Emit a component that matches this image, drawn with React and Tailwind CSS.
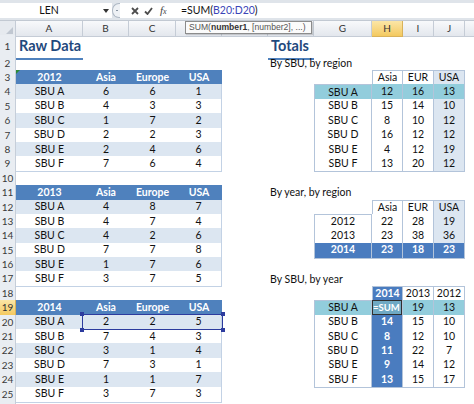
import React from "react";

const COLS =
  "grid grid-cols-[16px_67px_46px_47px_46px_46px_46px_58px_31px_31px_31px_40px]";
const C = "flex items-center justify-center overflow-hidden whitespace-nowrap";

const LHEAD = `${C} bg-[#4f81bd] text-white font-bold`;
const LBAND = `${C} bg-[#dce6f1] border-b border-[#c3d2e5]`;
const LWHITE = `${C} bg-white border-b border-[#c3d2e5]`;

const TITLE =
  "flex items-end pb-[1px] pl-[3px] font-bold text-[14.5px] text-[#1f497d] border-b-2 border-[#4f81bd] whitespace-nowrap";
const SUB =
  "flex items-center pl-[2px] whitespace-nowrap overflow-visible text-[#111] z-10";

const H = (t) => ({ t, cls: LHEAD });
const L = (t, band, last) => ({
  t,
  cls: `${band ? LBAND : LWHITE}${last ? " border-r" : ""}`,
});
const leftHead = (y) => [H(y), H("Asia"), H("Europe"), H("USA")];
const leftRow = (band, s, a, b, c) => [
  L(s, band),
  L(a, band),
  L(b, band),
  L(c, band, true),
];
const leftEmpty = [null, null, null, null];

const RB = `${C} border-r border-b border-[#b3c4da]`;
const R = (t, bg, extra = "") => ({ t, cls: `${RB} ${bg} ${extra}` });
const WH = "bg-white";
const TEAL = "bg-[#92cddc]";
const LIGHT = "bg-[#dce6f1]";
const DARK = "bg-[#4a7cbf] text-white font-bold";

const rightEmpty = [null, null, null, null];

const rows = [
  [1, [{ t: "Raw Data", cls: TITLE }, null, null, null], [null, { t: "Totals", cls: TITLE }], rightEmpty],
  [2, leftEmpty, [null, { t: "By SBU, by region", cls: SUB }], rightEmpty],
  [3, leftHead("2012"), [null, null], [null, R("Asia", WH, "border-l border-t"), R("EUR", WH, "border-t"), R("USA", LIGHT, "border-t")]],
  [4, leftRow(true, "SBU A", 6, 6, 1), [null, null], [R("SBU A", TEAL, "border-l border-t"), R(12, TEAL), R(16, TEAL), R(13, TEAL)]],
  [5, leftRow(false, "SBU B", 4, 3, 3), [null, null], [R("SBU B", WH, "border-l"), R(15, WH), R(14, WH), R(10, LIGHT)]],
  [6, leftRow(true, "SBU C", 1, 7, 2), [null, null], [R("SBU C", WH, "border-l"), R(8, WH), R(10, WH), R(12, LIGHT)]],
  [7, leftRow(false, "SBU D", 2, 2, 3), [null, null], [R("SBU D", WH, "border-l"), R(16, WH), R(12, WH), R(12, LIGHT)]],
  [8, leftRow(true, "SBU E", 2, 4, 6), [null, null], [R("SBU E", WH, "border-l"), R(4, WH), R(12, WH), R(19, LIGHT)]],
  [9, leftRow(false, "SBU F", 7, 6, 4), [null, null], [R("SBU F", WH, "border-l"), R(13, WH), R(20, WH), R(12, LIGHT)]],
  [10, leftEmpty, [null, null], rightEmpty],
  [11, leftHead("2013"), [null, { t: "By year, by region", cls: SUB }], rightEmpty],
  [12, leftRow(true, "SBU A", 4, 8, 7), [null, null], [null, R("Asia", WH, "border-l border-t"), R("EUR", WH, "border-t"), R("USA", LIGHT, "border-t")]],
  [13, leftRow(false, "SBU B", 4, 7, 4), [null, null], [R("2012", WH, "border-l border-t"), R(22, WH), R(28, WH), R(19, LIGHT)]],
  [14, leftRow(true, "SBU C", 4, 2, 6), [null, null], [R("2013", WH, "border-l"), R(23, WH), R(38, WH), R(36, LIGHT)]],
  [15, leftRow(false, "SBU D", 7, 7, 8), [null, null], [R("2014", DARK, "border-l"), R(23, DARK), R(18, DARK), R(23, DARK)]],
  [16, leftRow(true, "SBU E", 1, 7, 6), [null, null], rightEmpty],
  [17, leftRow(false, "SBU F", 3, 7, 5), [null, { t: "By SBU, by year", cls: SUB }], rightEmpty],
  [18, leftEmpty, [null, null], [null, R("2014", DARK, "border-l border-t"), R("2013", WH, "border-t"), R("2012", WH, "border-t")]],
  [19, leftHead("2014"), [null, null], [R("SBU A", TEAL, "border-l border-t"), { t: "=SUM", cls: `${RB} bg-[#6fa9c4] text-white font-bold text-[9.5px] justify-start pl-[1px] relative` , active: true }, R(19, TEAL), R(13, TEAL)]],
  [20, leftRow(true, "SBU A", 2, 2, 5), [null, null], [R("SBU B", WH, "border-l"), R(14, DARK), R(15, WH), R(10, WH)]],
  [21, leftRow(false, "SBU B", 7, 4, 3), [null, null], [R("SBU C", WH, "border-l"), R(8, DARK), R(12, WH), R(10, WH)]],
  [22, leftRow(true, "SBU C", 3, 1, 4), [null, null], [R("SBU D", WH, "border-l"), R(11, DARK), R(22, WH), R(7, WH)]],
  [23, leftRow(false, "SBU D", 7, 3, 1), [null, null], [R("SBU E", WH, "border-l"), R(9, DARK), R(14, WH), R(12, WH)]],
  [24, leftRow(true, "SBU E", 1, 1, 7), [null, null], [R("SBU F", WH, "border-l"), R(13, DARK), R(15, WH), R(17, WH)]],
  [25, leftRow(false, "SBU F", 3, 7, 3), [null, null], rightEmpty],
  [26, leftEmpty, [null, null], rightEmpty],
];

function Cell({ c }) {
  if (!c) return <div />;
  return (
    <div className={c.cls}>
      {c.t}
      {c.active && (
        <div className="absolute inset-[-1px] z-20 border-2 border-[#2f2f2f]" />
      )}
    </div>
  );
}

function RowHeader({ n }) {
  const hi = n === 19;
  return (
    <div
      className={
        hi
          ? "flex items-center justify-center bg-linear-to-b from-[#fbe6a6] to-[#f4c95e] border-r border-b border-[#d9b25a] text-[10px] text-[#333]"
          : "flex items-center justify-center bg-[#e9edf2] border-r border-b border-[#c6ced9] text-[10px] text-[#3a3a3a]"
      }
    >
      {n}
    </div>
  );
}

function SheetRow({ row }) {
  const [n, left, mid, right] = row;
  const h =
    n === 1 ? "h-[21px]" : n === 2 ? "h-[14px]" : "h-[14.4px]";
  const cells = [...left, ...mid, ...right, null];
  return (
    <div className={`${COLS} ${h} relative`}>
      <RowHeader n={n} />
      {cells.map((c, i) => (
        <Cell key={i} c={c} />
      ))}
      {n === 3 && (
        <div className="absolute left-[16px] top-0 w-0 h-0 border-t-[4px] border-r-[4px] border-t-[#2e8b3a] border-r-transparent" />
      )}
      {n === 20 && (
        <div className="absolute z-20 left-[82px] top-[-1px] w-[141px] h-[16px] border-[1.5px] border-[#2c3b9e]">
          <div className="absolute left-[-3px] top-[-3px] w-[4px] h-[4px] bg-[#2c3b9e]" />
          <div className="absolute right-[-3px] top-[-3px] w-[4px] h-[4px] bg-[#2c3b9e]" />
          <div className="absolute left-[-3px] bottom-[-3px] w-[4px] h-[4px] bg-[#2c3b9e]" />
          <div className="absolute right-[-3px] bottom-[-3px] w-[4px] h-[4px] bg-[#2c3b9e]" />
        </div>
      )}
    </div>
  );
}

const COLHEAD =
  "flex items-center justify-center border-r border-b border-[#c5ccd6] bg-linear-to-b from-[#f8f9fb] to-[#e3e7ed] text-[10px] text-[#333]";
const COLHEAD_HI =
  "flex items-center justify-center border-r border-b border-[#d9b25a] bg-linear-to-b from-[#fbe6a6] to-[#f4c95e] text-[10px] text-[#333]";

function ColumnHeaders() {
  const letters = ["A", "B", "C", "D", "E", "F", "G", "H", "I", "J", "K"];
  return (
    <div className={`${COLS} h-[14px]`}>
      <div className="flex items-end justify-end border-r border-b border-[#c5ccd6] bg-[#e6eaef] p-[2px]">
        <svg width="7" height="7" viewBox="0 0 7 7">
          <path d="M7 0V7H0z" fill="#c0c7d1" />
        </svg>
      </div>
      {letters.map((l) => (
        <div key={l} className={l === "H" ? COLHEAD_HI : COLHEAD}>
          {l}
        </div>
      ))}
    </div>
  );
}

function FormulaBar() {
  return (
    <div className="h-[21px] bg-[#dfe4ea] pt-[3px] pb-[2px] flex border-b border-[#c2c9d2]">
      <div className="w-[112px] bg-white flex items-center">
        <span className="w-[98px] text-center text-[10.5px] text-[#111]">LEN</span>
        <svg width="6" height="4" viewBox="0 0 6 4" className="ml-[5px]">
          <path d="M0 0h6L3 4z" fill="#333" />
        </svg>
      </div>
      <div className="w-[8px] bg-[#eef1f5] border-l border-t border-b border-[#aeb8c4] rounded-l-[7px] flex items-center justify-center">
        <div className="w-[2px] h-[1px] bg-[#8894a2]" />
      </div>
      <div className="w-[57px] bg-white flex items-center">
        <svg width="8" height="8" viewBox="0 0 8 8" className="ml-[11px]">
          <path d="M1 1L7 7M7 1L1 7" stroke="#4d4d4d" strokeWidth="1.8" />
        </svg>
        <svg width="9" height="8" viewBox="0 0 9 8" className="ml-[5px]">
          <path d="M1 4.5L3.5 7L8 1" stroke="#4d4d4d" strokeWidth="1.8" fill="none" />
        </svg>
        <span className="ml-[7px] font-['Liberation_Serif',serif] italic text-[11px] text-[#444] leading-none">
          f<span className="text-[8px]">x</span>
        </span>
      </div>
      <div className="flex-1 bg-white flex items-center pl-[4px] text-[10.5px] text-[#111]">
        =SUM(<span className="text-[#3b46b8]">B20:D20</span>)
      </div>
    </div>
  );
}

export default function App() {
  return (
    <div className="w-[474px] h-[404px] overflow-hidden bg-white relative font-['Lato',sans-serif] text-[10.5px] text-[#111]">
      <FormulaBar />
      <ColumnHeaders />
      {rows.map((r) => (
        <SheetRow key={r[0]} row={r} />
      ))}
      <div className="absolute z-30 left-[185px] top-[21px] w-[127px] h-[13px] bg-[#fbfbfb] border border-[#8c8c8c] shadow-[1px_1px_1px_rgba(0,0,0,0.15)] flex items-center pl-[3px] font-['Liberation_Sans',sans-serif] text-[8.6px] text-[#555] whitespace-nowrap">
        SUM(<span className="font-bold text-[#333]">number1</span>, [number2], ...)
      </div>
    </div>
  );
}
